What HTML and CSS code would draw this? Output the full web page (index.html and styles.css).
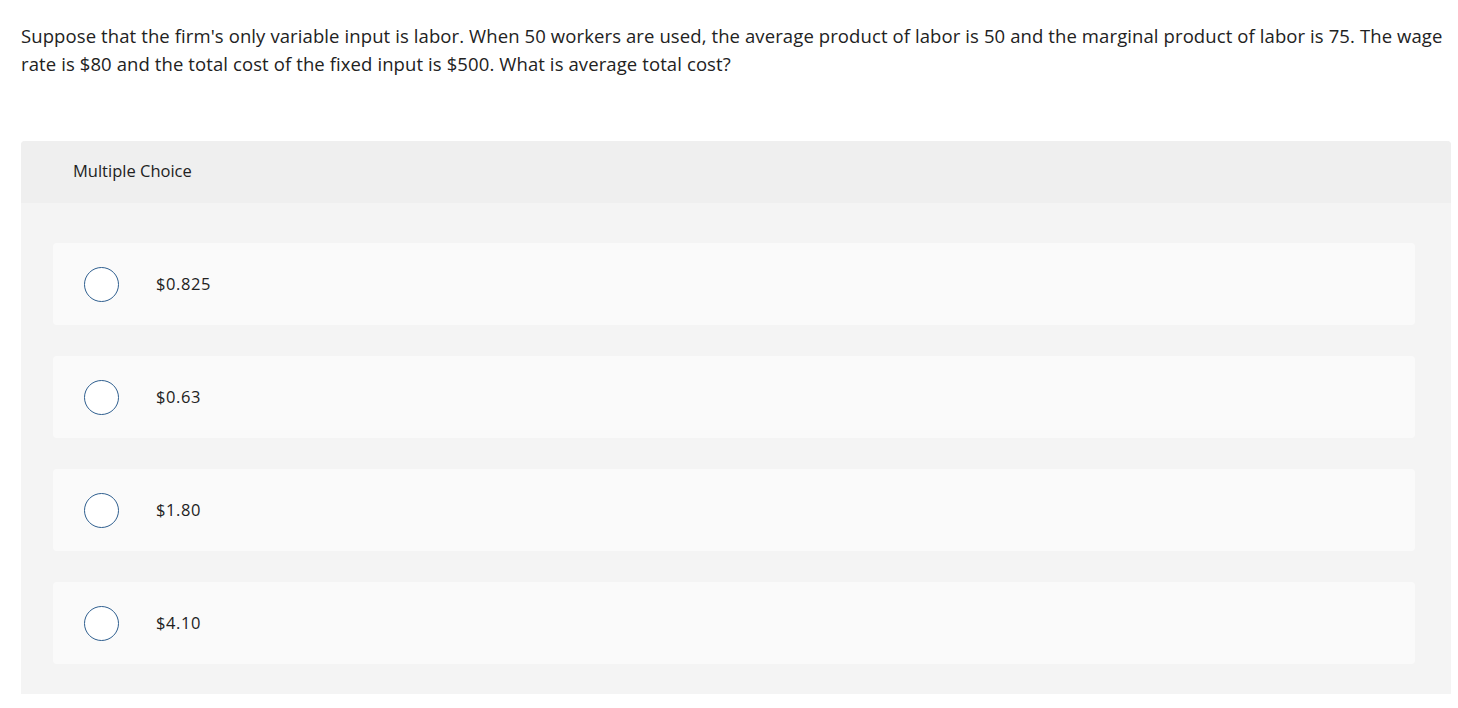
FILE: index.html
```html
<!DOCTYPE html>
<html lang="en">
<head>
<meta charset="utf-8">
<title>Multiple Choice</title>
<link rel="stylesheet" href="styles.css">
</head>
<body>
<div class="page">
  <p class="question">Suppose that the firm's only variable input is labor. When 50 workers are used, the average product of labor is 50 and the marginal product of labor is 75. The wage rate is $80 and the total cost of the fixed input is $500. What is average total cost?</p>
  <section class="card">
    <header class="card-header">Multiple Choice</header>
    <div class="card-body">
      <label class="option"><span class="radio"></span><span class="answer">$0.825</span></label>
      <label class="option"><span class="radio"></span><span class="answer">$0.63</span></label>
      <label class="option"><span class="radio"></span><span class="answer">$1.80</span></label>
      <label class="option"><span class="radio"></span><span class="answer">$4.10</span></label>
    </div>
  </section>
</div>
</body>
</html>
```
FILE: styles.css
```css
html, body {
  margin: 0;
  padding: 0;
  background: #ffffff;
}
body {
  font-family: "Open Sans", "Lato", sans-serif;
  color: #1f1f1f;
}
.page {
  padding: 22px 7px 0 21px;
}
.question {
  margin: 0;
  font-size: 18.5px;
  letter-spacing: 0.1px;
  line-height: 28px;
  color: #222222;
  max-width: 1430px;
}
.card {
  margin-top: 63px;
  width: 1430px;
  background: #f4f4f4;
  border-radius: 4px 4px 0 0;
}
.card-header {
  height: 62px;
  box-sizing: border-box;
  display: flex;
  align-items: center;
  padding: 0 0 3px 52px;
  background: #efefef;
  border-radius: 4px 4px 0 0;
  font-size: 16.5px;
  color: #222222;
}
.card-body {
  padding: 40px 36px 30px 32px;
  display: flex;
  flex-direction: column;
  gap: 31px;
}
.option {
  height: 82px;
  box-sizing: border-box;
  display: flex;
  align-items: center;
  background: #fafafa;
  border-radius: 4px;
  padding-left: 31px;
}
.radio {
  width: 33px;
  height: 33px;
  border: 1.5px solid #2f5f8f;
  border-radius: 50%;
  background: #ffffff;
  flex: none;
}
.answer {
  margin-left: 37px;
  padding-bottom: 1px;
  font-size: 16.5px;
  letter-spacing: 0.6px;
  color: #222222;
}
```
